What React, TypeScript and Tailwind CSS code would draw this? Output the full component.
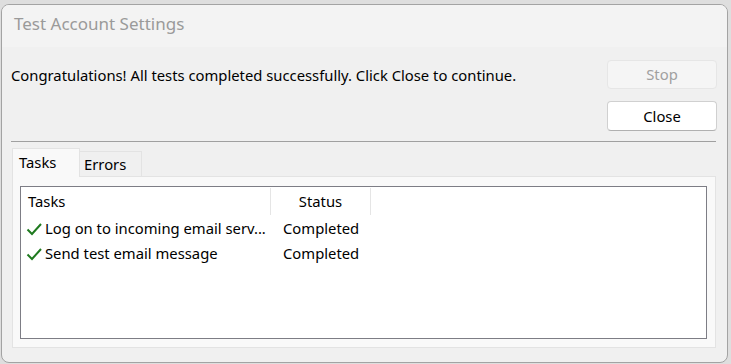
const font = { fontFamily: '"Noto Sans", "Open Sans", sans-serif' }

type Task = { name: string; status: string }

const tasks: Task[] = [
  { name: 'Log on to incoming email serv...', status: 'Completed' },
  { name: 'Send test email message', status: 'Completed' },
]

function Check() {
  return (
    <svg width="16" height="16" viewBox="0 0 16 16" className="shrink-0">
      <path d="M1.5 8.5 L6 13 L15 3" fill="none" stroke="#1f7a1f" strokeWidth="2" />
    </svg>
  )
}

export default function App() {
  return (
    <div className="w-[731px] h-[364px] bg-[#dedede] pt-[4px] pl-[1px] overflow-hidden" style={font}>
      <div className="w-[727px] h-[359px] rounded-[8px] border border-[#a3a3a3] bg-[#f0f0f0] overflow-hidden flex flex-col">
        {/* title bar */}
        <div className="h-[42px] bg-[#f3f3f3] flex items-center pl-[12px] pb-[4px]">
          <span className="text-[17px] text-[#9a9a9a]">Test Account Settings</span>
        </div>

        {/* message + buttons */}
        <div className="flex pl-[9px] pr-[10px] pt-[13px]">
          <p className="flex-1 text-[14.8px] leading-[20px] text-black pt-[5px]">
            Congratulations! All tests completed successfully. Click Close to continue.
          </p>
          <div className="flex flex-col gap-[12px] w-[110px]">
            <button className="h-[29px] rounded-[4px] border border-[#e6e6e6] bg-[#f5f5f5] text-[14.8px] text-[#a0a0a0]">
              Stop
            </button>
            <button className="h-[30px] rounded-[4px] border border-[#d0d0d0] border-b-[#b0b0b0] bg-white text-[14.8px] text-black">
              Close
            </button>
          </div>
        </div>

        <div className="mt-[10px] ml-[9px] mr-[11px] h-px bg-[#a0a0a0]" />

        {/* tabs */}
        <div className="mt-[6px] ml-[10px] mr-[11px] flex flex-col">
          <div className="flex items-end h-[29px] relative z-10">
            <div className="h-[29px] w-[68px] bg-[#f9f9f9] border border-b-0 border-[#e3e3e3] pl-[6px] pt-[3px] text-[14.8px] leading-[20px] text-black">
              Tasks
            </div>
            <div className="h-[26px] w-[62px] bg-[#f0f0f0] border border-l-0 border-[#e3e3e3] pl-[4px] pt-[2px] text-[14.8px] leading-[20px] text-black">
              Errors
            </div>
          </div>
          <div className="-mt-px h-[172px] bg-[#f9f9f9] border border-[#e3e3e3] pl-[7px] pr-[8px] pt-[9px] pb-[8px]">
            <div className="h-full bg-white border border-[#7d7d85] text-[14.8px] text-black">
              <div className="flex h-[28px] items-stretch pt-px">
                <div className="w-[250px] pl-[7px] flex items-center border-r border-[#e5e5e5]">Tasks</div>
                <div className="w-[100px] flex items-center justify-center border-r border-[#e5e5e5]">Status</div>
              </div>
              <div className="pt-px">
                {tasks.map((t) => (
                  <div key={t.name} className="flex h-[25px] items-center">
                    <div className="w-[250px] pl-[5px] flex items-center gap-[3px]">
                      <Check />
                      <span>{t.name}</span>
                    </div>
                    <div className="w-[100px] pl-[12px]">{t.status}</div>
                  </div>
                ))}
              </div>
            </div>
          </div>
        </div>
      </div>
    </div>
  )
}
